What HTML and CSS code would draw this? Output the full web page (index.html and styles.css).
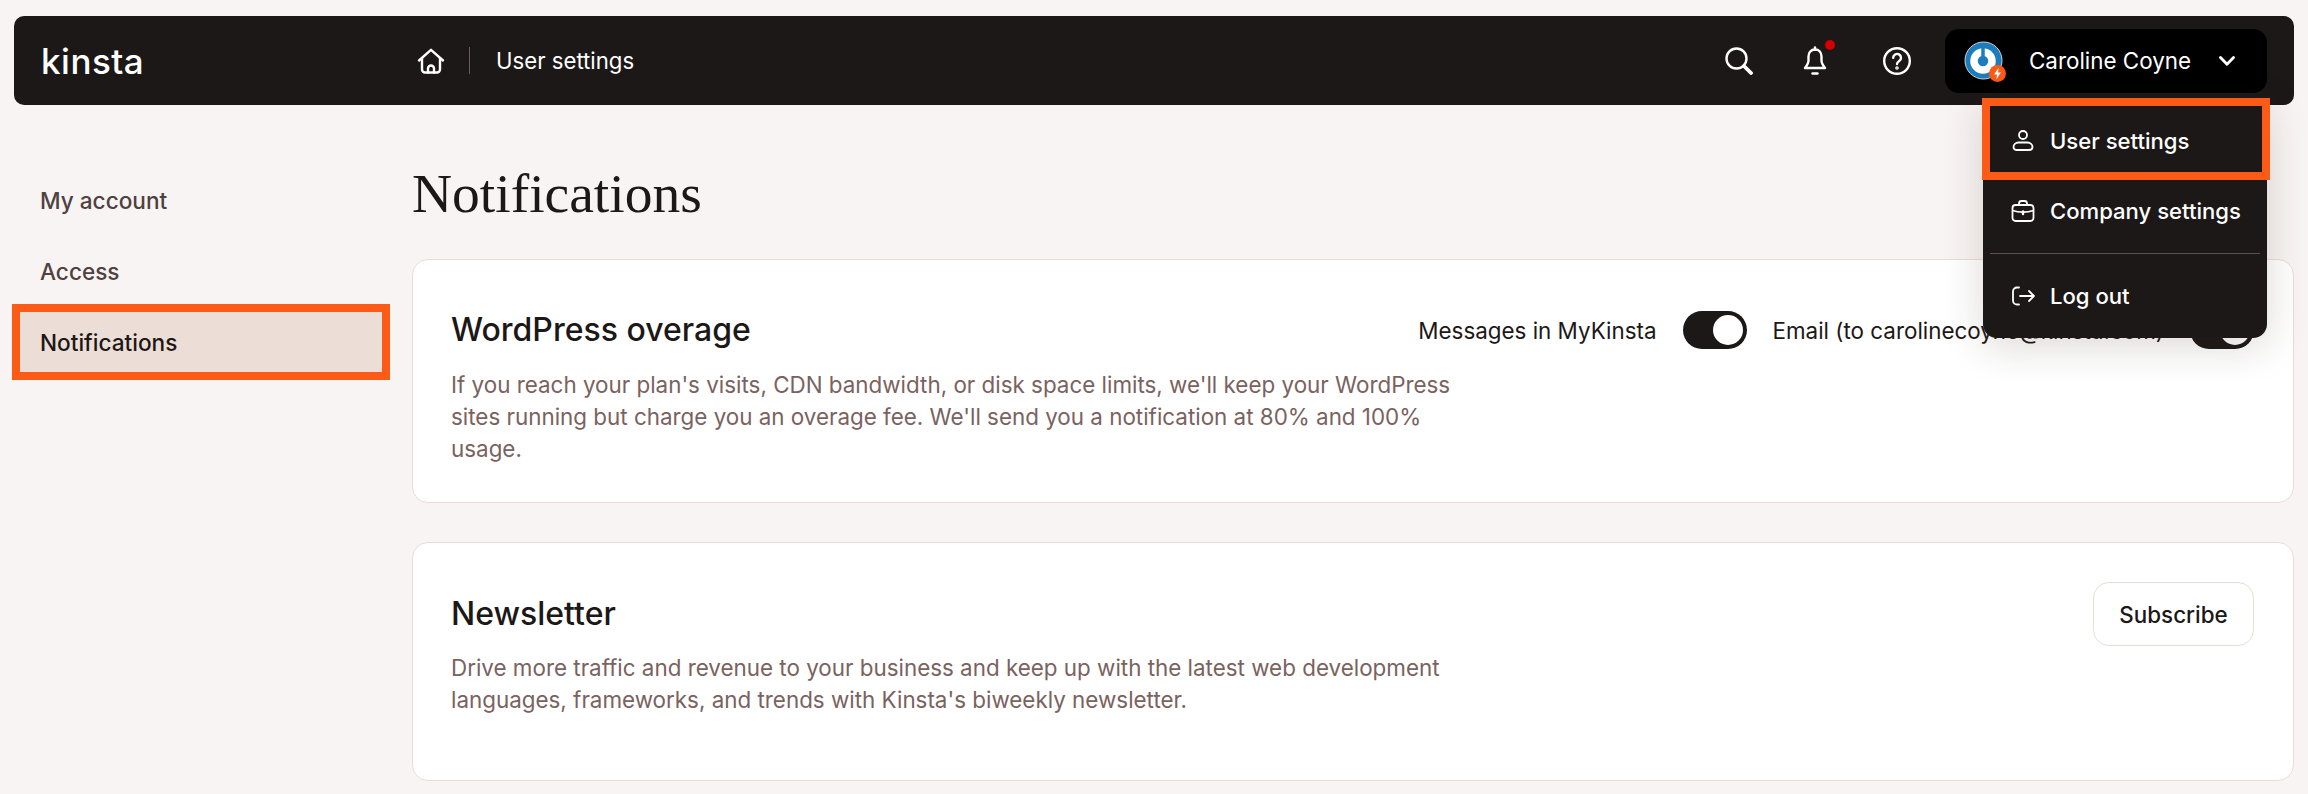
FILE: index.html
```html
<!DOCTYPE html>
<html lang="en">
<head>
    <meta charset="UTF-8">
    <meta name="viewport" content="width=device-width, initial-scale=1.0">
    <title>User settings - Notifications</title>
    <link rel="stylesheet" href="styles.css">
</head>
<body>
    <!-- top bar -->
    <header class="topbar">
        <div class="logo">kinsta</div>
        <div class="crumbs">
            <svg class="home-icon" viewBox="1 0 26 26" fill="none" stroke="#fff" stroke-width="2.4" stroke-linecap="round" stroke-linejoin="round">
                <path d="M2 12.500 14 1.800l12 10.700"/>
                <path d="M5 10.500V21.500a3 3 0 0 0 3 3h12a3 3 0 0 0 3-3V10.500"/>
                <path d="M11 24.500v-4a3 3 0 0 1 6 0v4"/>
            </svg>
            <span class="crumb-line"></span>
            <span class="crumb-text">User settings</span>
        </div>
        <div class="top-actions">
            <svg class="top-icon search-icon" viewBox="0 0 28 28" fill="none" stroke="#fff" stroke-linecap="round">
                <circle cx="11.500" cy="11.500" r="10" stroke-width="2.400"/>
                <path d="M19 19l7 7" stroke-width="3.800"/>
            </svg>
            <div class="bell">
                <svg class="top-icon bell-icon" viewBox="0 0 24 30" fill="none" stroke="#fff" stroke-width="2.400" stroke-linecap="round" stroke-linejoin="round">
                    <path d="M12 1.500v2"/>
                    <path d="M12 3.500c-4 0-6.500 3-6.500 7v4c0 3-1.500 5-3.500 7.500h20c-2-2.500-3.500-4.500-3.500-7.500v-4c0-4-2.500-7-6.500-7z"/>
                    <path d="M9.500 27.500h5"/>
                </svg>
                <span class="bell-dot"></span>
            </div>
            <svg class="top-icon help-icon" viewBox="0 0 28 28" fill="none" stroke="#fff" stroke-width="2.400" stroke-linecap="round" stroke-linejoin="round">
                <circle cx="14" cy="14" r="12.800"/>
                <path d="M10.200 10.800a3.900 3.900 0 1 1 6 3.300c-1.400.9-2.200 1.600-2.200 3"/>
                <circle cx="14" cy="21" r=".6" fill="#fff"/>
            </svg>
            <div class="account">
                <div class="avatar">
                    <svg viewBox="0 0 39 39">
                        <circle cx="19.500" cy="19.500" r="18.500" fill="#1b7dbd" stroke="#cfd6da" stroke-width="1"/>
                        <circle cx="19" cy="20" r="9" fill="none" stroke="#fff" stroke-width="7.500"/>
                        <path d="M19 6v13" stroke="#1b7dbd" stroke-width="3.500"/>
                    </svg>
                    <span class="avatar-badge">
                        <svg viewBox="0 0 16 16"><path d="M9 2.500 4.800 9h2.700L7 13.500 11.200 7H8.500z" fill="#fff"/></svg>
                    </span>
                </div>
                <span class="account-name">Caroline Coyne</span>
                <svg class="chevron" viewBox="0 0 16 10" fill="none" stroke="#fff" stroke-width="2.800" stroke-linecap="round" stroke-linejoin="round">
                    <path d="M1.500 1.500 8 8.300l6.500-6.800"/>
                </svg>
            </div>
        </div>
    </header>

    <!-- account menu -->
    <div class="account-menu">
        <a class="menu-item marked" href="#">
            <svg class="menu-icon" viewBox="0 0 24 24" fill="none" stroke="#fff" stroke-width="1.800">
                <circle cx="12" cy="6" r="4"/>
                <path d="M7.500 13.500h9c2.800 0 5 2 5 4.500 0 2-1.500 3-3.500 3H6c-2 0-3.500-1-3.500-3 0-2.500 2.200-4.500 5-4.500z"/>
            </svg>
            User settings
        </a>
        <a class="menu-item company" href="#">
            <svg class="menu-icon" viewBox="0 0 24 24" fill="none" stroke="#fff" stroke-width="1.800" stroke-linejoin="round">
                <path d="M8 6V4.500A2.500 2.500 0 0 1 10.500 2h3A2.500 2.500 0 0 1 16 4.500V6"/>
                <rect x="1.500" y="6" width="21" height="16" rx="3"/>
                <path d="M1.500 11.500c6 2 15 2 21 0"/>
                <path d="M12 12.500v2.500" stroke-linecap="round" stroke-width="2.400"/>
            </svg>
            Company settings
        </a>
        <div class="menu-line"></div>
        <a class="menu-item logout" href="#">
            <svg class="menu-icon" viewBox="0 0 24 24" fill="none" stroke="#fff" stroke-width="1.800" stroke-linecap="round" stroke-linejoin="round">
                <path d="M8 3.500H6a4 4 0 0 0-4 4v9a4 4 0 0 0 4 4h2"/>
                <path d="M9 12h14M18 7l5 5-5 5"/>
            </svg>
            Log out
        </a>
    </div>

    <div class="page">
        <!-- side menu -->
        <nav class="side-menu">
            <a class="side-item" href="#">My account</a>
            <a class="side-item" href="#">Access</a>
            <a class="side-item active" href="#">Notifications</a>
        </nav>

        <main class="content">
            <h1 class="page-title">Notifications</h1>

            <section class="card">
                <div class="card-head overage">
                    <h2 class="card-title">WordPress overage</h2>
                    <div class="switches">
                        <span class="switch-label">Messages in MyKinsta</span>
                        <span class="toggle"></span>
                        <span class="switch-label">Email (to carolinecoyne@kinsta.com)</span>
                        <span class="toggle"></span>
                    </div>
                </div>
                <p class="card-text">If you reach your plan's visits, CDN bandwidth, or disk space limits, we'll keep your WordPress sites running but charge you an overage fee. We'll send you a notification at 80% and 100% usage.</p>
            </section>

            <section class="card newsletter">
                <div class="card-head">
                    <h2 class="card-title">Newsletter</h2>
                    <button class="subscribe-btn">Subscribe</button>
                </div>
                <p class="card-text">Drive more traffic and revenue to your business and keep up with the latest web development languages, frameworks, and trends with Kinsta's biweekly newsletter.</p>
            </section>
        </main>
    </div>
</body>
</html>
```

FILE: styles.css
```css
* {
    margin: 0;
    padding: 0;
    box-sizing: border-box;
    font-family: Inter, "Liberation Sans", sans-serif;
}

html, body {
    height: 794px;
    overflow: hidden;
}

body {
    position: relative;
    padding: 16px 14px 0;
    background-color: #f8f4f3;
    color: #1c1817;
}

a {
    text-decoration: none;
}

/* top bar */
.topbar {
    display: flex;
    align-items: center;
    height: 89px;
    padding: 0 27px;
    background-color: #1c1817;
    border-radius: 10px;
}

.logo {
    width: 376px;
    color: #fff;
    font-size: 35px;
    font-weight: 500;
    line-height: 40px;
    letter-spacing: 0.5px;
}

.crumbs {
    display: flex;
    align-items: center;
}

.home-icon {
    width: 28px;
    height: 26px;
}

.crumb-line {
    width: 1px;
    height: 27px;
    margin: 0 26px 0 24px;
    background-color: #6e5a58;
}

.crumb-text {
    color: #fff;
    font-size: 22.2px;
    font-weight: 400;
}

.top-actions {
    display: flex;
    align-items: center;
    margin-left: auto;
}

.top-icon {
    display: block;
}

.search-icon {
    width: 28px;
    height: 28px;
}

.bell {
    position: relative;
    margin-left: 50px;
}

.bell-icon {
    width: 24px;
    height: 30px;
}

.bell-dot {
    position: absolute;
    top: -6px;
    right: -8px;
    width: 10px;
    height: 10px;
    background-color: #d40000;
    border-radius: 50%;
}

.help-icon {
    width: 28px;
    height: 28px;
    margin-left: 56px;
}

.account {
    display: flex;
    align-items: center;
    width: 322px;
    height: 64px;
    margin-left: 34px;
    padding-left: 19px;
    background-color: #000;
    border-radius: 14px;
}

.avatar {
    position: relative;
    width: 39px;
    height: 39px;
}

.avatar svg {
    display: block;
}

.avatar-badge {
    position: absolute;
    right: -3px;
    bottom: -2px;
    width: 17px;
    height: 17px;
    background-color: #fc5a17;
    border-radius: 50%;
}

.account-name {
    margin-left: 26px;
    color: #fff;
    font-size: 22.4px;
}

.chevron {
    width: 16px;
    height: 10px;
    margin-left: 28px;
}

/* account menu */
.account-menu {
    position: absolute;
    top: 98px;
    left: 1983px;
    width: 284px;
    height: 240px;
    padding: 8px 5px 0 7px;
    background-color: #1c1817;
    border-radius: 0 0 14px 14px;
    box-shadow: 0 8px 40px rgba(60, 40, 30, 0.18);
    z-index: 5;
}

.menu-item {
    display: flex;
    align-items: center;
    gap: 15px;
    height: 66px;
    padding-left: 21px;
    color: #fff;
    font-size: 22.1px;
    font-weight: 450;
}

.menu-item.marked {
    padding-top: 4px;
    outline: 8px solid #fc5a17;
}

.menu-item.company {
    height: 81px;
    padding-bottom: 3px;
}

.menu-item.logout {
    height: 85px;
    padding-bottom: 2px;
}

.menu-icon {
    width: 24px;
    height: 24px;
    flex-shrink: 0;
}

.menu-line {
    width: 270px;
    height: 1px;
    background-color: #5c5150;
}

/* page */
.page {
    display: flex;
}

.side-menu {
    display: flex;
    flex-direction: column;
    gap: 11px;
    width: 362px;
    margin: 65px 0 0 6px;
}

.side-item {
    display: flex;
    align-items: center;
    height: 60px;
    padding-left: 20px;
    color: #4f4140;
    font-size: 22.6px;
    font-weight: 500;
}

.side-item.active {
    background-color: #ecddd6;
    color: #1c1817;
    outline: 8px solid #fc5a17;
}

.content {
    flex: 1;
    margin-left: 30px;
    padding-top: 57px;
}

.page-title {
    height: 97px;
    color: #1c1817;
    font-family: "Liberation Serif", serif;
    font-size: 55.5px;
    font-weight: 400;
    line-height: 64px;
}

.card {
    min-height: 244px;
    margin-bottom: 39px;
    padding: 39px 39px 37px 38px;
    background-color: #fff;
    border: 1px solid #eaddd5;
    border-radius: 16px;
}

.card.newsletter {
    min-height: 239px;
}

.card-head {
    display: flex;
    align-items: center;
    justify-content: space-between;
    min-height: 64px;
}

.card-head.overage {
    padding-bottom: 2px;
}

.card-title {
    font-size: 32px;
    font-weight: 500;
    line-height: 40px;
}

.switches {
    display: flex;
    align-items: center;
}

.switch-label {
    margin-right: 26px;
    font-size: 22.4px;
}

.toggle {
    position: relative;
    width: 64px;
    height: 38px;
    margin-right: 26px;
    background-color: #1c1817;
    border-radius: 19px;
}

.toggle:last-child {
    margin-right: 0;
}

.toggle:before {
    position: absolute;
    top: 4px;
    right: 4px;
    width: 30px;
    height: 30px;
    content: "";
    background-color: #fff;
    border-radius: 50%;
}

.card-text {
    max-width: 1036px;
    margin-top: 6px;
    color: #7a625f;
    font-size: 22.4px;
    line-height: 32px;
}

.subscribe-btn {
    width: 161px;
    height: 64px;
    background-color: #fff;
    border: 1px solid #eaddd5;
    border-radius: 16px;
    color: #1c1817;
    font-size: 22.4px;
    font-weight: 500;
}
```
